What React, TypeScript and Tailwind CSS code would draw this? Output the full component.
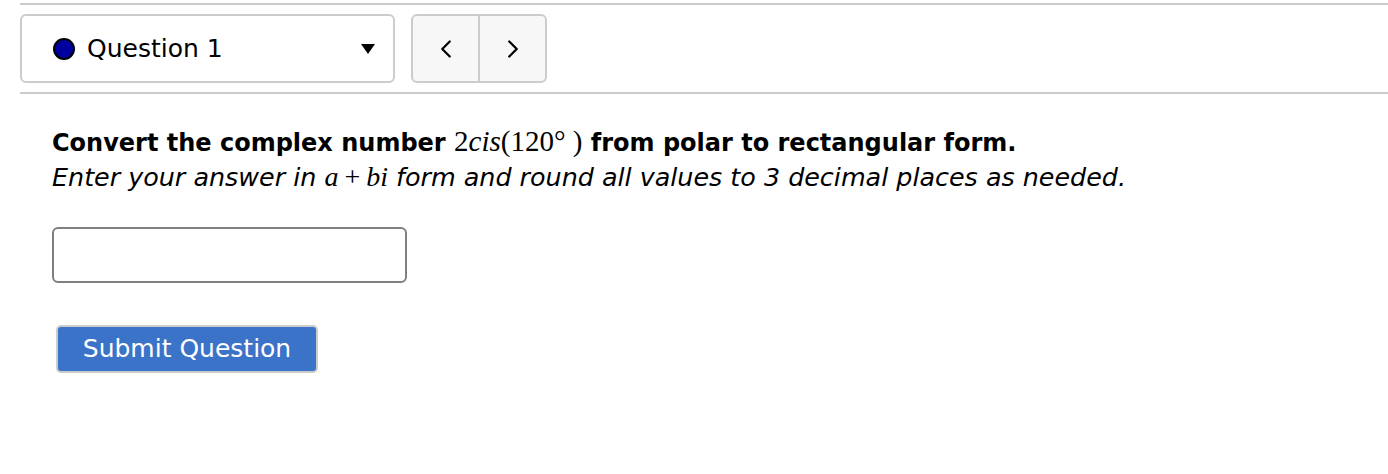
import { ChevronLeft, ChevronRight } from 'lucide-react'

const sans = { fontFamily: '"DejaVu Sans", Verdana, sans-serif' }
const math = { fontFamily: '"Liberation Serif", "DejaVu Serif", serif' }

function Sel() {
  return (
    <div className="flex items-center w-[375px] h-[69px] border-2 border-[#cccccc] rounded-[6px] bg-white pl-[31px] pr-[18px]">
      <span className="w-[22px] h-[22px] rounded-full bg-[#0000a0] border-[2px] border-black" />
      <span className="ml-[12px] text-[25px] text-black flex-1">Question 1</span>
      <svg width="14" height="10" viewBox="0 0 14 10">
        <path d="M0 0 L14 0 L7 10 Z" fill="black" />
      </svg>
    </div>
  )
}

function Nav() {
  return (
    <div className="flex ml-[16px] h-[69px] w-[136px] border-2 border-[#cccccc] rounded-[6px] bg-[#f7f7f7]">
      <button className="flex-1 flex items-center justify-center border-r-2 border-[#cccccc]">
        <ChevronLeft className="w-[30px] h-[30px]" strokeWidth={1.8} />
      </button>
      <button className="flex-1 flex items-center justify-center">
        <ChevronRight className="w-[30px] h-[30px]" strokeWidth={1.8} />
      </button>
    </div>
  )
}

export default function App() {
  return (
    <div className="w-[1388px] h-[474px] bg-white pl-[20px] pt-[3px]" style={sans}>
      <div className="h-[2px] bg-[#cccccc]" />
      <div className="flex py-[9px]">
        <Sel />
        <Nav />
      </div>
      <div className="h-[2px] bg-[#cccccc]" />
      <div className="pl-[32px] pt-[29px]">
        <p className="text-[24px] font-bold text-black leading-[36px] whitespace-nowrap">
          Convert the complex number{' '}
          <span className="font-normal text-[29px]" style={math}>
            2<i>cis</i>(120°&nbsp;)
          </span>{' '}
          from polar to rectangular form.
        </p>
        <p className="-mt-[2px] text-[25.4px] italic text-black leading-[36px] whitespace-nowrap">
          Enter your answer in{' '}
          <span className="not-italic text-[28px]" style={math}>
            <i>a</i>
            <span className="mx-[6px]">+</span>
            <i>bi</i>
          </span>{' '}
          form and round all values to 3 decimal places as needed.
        </p>
        <input className="block mt-[32px] w-[355px] h-[56px] border-2 border-[#808080] rounded-[6px]" />
        <button className="block mt-[42px] ml-[4px] w-[262px] h-[48px] bg-[#3b73c8] border-2 border-[#cccccc] rounded-[5px] text-white text-[25px]">
          Submit Question
        </button>
      </div>
    </div>
  )
}
